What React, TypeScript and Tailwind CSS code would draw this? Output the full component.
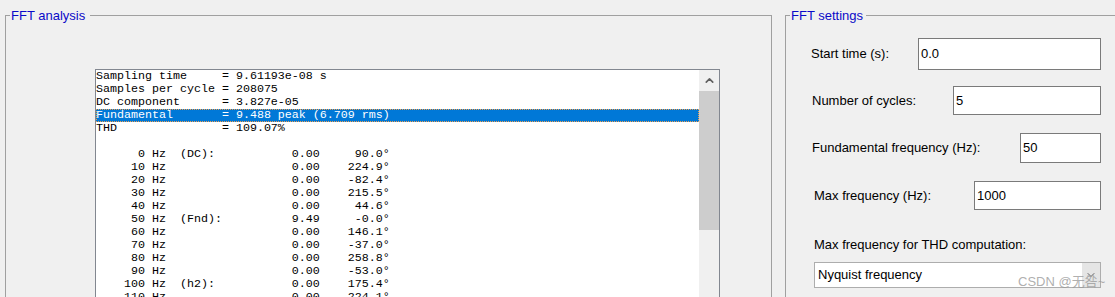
import { ChevronUp, ChevronDown } from "lucide-react"

const header = [
  "Sampling time     = 9.61193e-08 s",
  "Samples per cycle = 208075",
  "DC component      = 3.827e-05",
  "Fundamental       = 9.488 peak (6.709 rms)",
  "THD               = 109.07%",
]

const harmonics: [number, string, string, string][] = [
  [0, "(DC):", "0.00", "90.0"],
  [10, "", "0.00", "224.9"],
  [20, "", "0.00", "-82.4"],
  [30, "", "0.00", "215.5"],
  [40, "", "0.00", "44.6"],
  [50, "(Fnd):", "9.49", "-0.0"],
  [60, "", "0.00", "146.1"],
  [70, "", "0.00", "-37.0"],
  [80, "", "0.00", "258.8"],
  [90, "", "0.00", "-53.0"],
  [100, "(h2):", "0.00", "175.4"],
  [110, "", "0.00", "224.1"],
  [120, "", "0.00", "-12.7"],
]

const rowText = ([f, label, amp, ang]: [number, string, string, string]) =>
  `${String(f).padStart(7)} Hz  ${label.padEnd(16)}${amp}${ang.padStart(9)}°`

function Field({ label, value, pl, w, h }: { label: string; value: string; pl: string; w: string; h: string }) {
  return (
    <div className={`flex items-center justify-between ${pl}`}>
      <span>{label}</span>
      <div className={`${w} ${h} bg-white border border-[#7a7a7a] flex items-center pl-[2px]`}>{value}</div>
    </div>
  )
}

export default function App() {
  return (
    <div
      className="relative h-[297px] w-[1115px] overflow-hidden bg-[#f0f0f0] text-[13px] text-black"
      style={{ fontFamily: '"Liberation Sans", Arial, sans-serif' }}
    >
      <div className="flex pt-[8px] pl-[5px] gap-[13px]">
        {/* FFT analysis */}
        <fieldset className="w-[767px] h-[400px] border border-[#a0a0a0] shrink-0">
          <legend className="ml-[4px] pl-[1px] pr-[5px] leading-[15px] text-[#0a0ac8]">FFT analysis</legend>
          <div className="ml-[89px] mt-[46px] w-[625px] h-[300px] bg-white border border-[#828790] flex">
            <div
              className="flex-1 whitespace-pre text-[11.67px] leading-[13px]"
              style={{ fontFamily: '"Liberation Mono", "Courier New", monospace' }}
            >
              {header.map((line, i) => (
                <div
                  key={i}
                  className={
                    i === 3
                      ? "h-[13px] bg-[#0078d7] text-white outline-1 outline-dotted outline-[#f0a050] -outline-offset-1"
                      : "h-[13px]"
                  }
                >
                  {line}
                </div>
              ))}
              <div className="h-[13px]" />
              {harmonics.map((r, i) => (
                <div key={i} className="h-[13px]">
                  {rowText(r)}
                </div>
              ))}
            </div>
            <div className="w-[20px] bg-[#f0f0f0] flex flex-col">
              <div className="h-[21px] flex items-center justify-center text-[#606060]">
                <ChevronUp className="w-[13px] h-[13px]" strokeWidth={3} />
              </div>
              <div className="h-[139px] bg-[#cdcdcd]" />
            </div>
          </div>
        </fieldset>

        {/* FFT settings */}
        <fieldset className="w-[340px] h-[400px] border border-[#a0a0a0] shrink-0">
          <legend className="ml-[4px] pl-[1px] pr-[3px] leading-[15px] text-[#0a0ac8]">FFT settings</legend>
          <div className="w-[315px] mt-[15px] flex flex-col">
            <Field label="Start time (s):" value="0.0" pl="pl-[25px]" w="w-[183px]" h="h-[32px]" />
            <div className="mt-[16px]">
              <Field label="Number of cycles:" value="5" pl="pl-[26px]" w="w-[148px]" h="h-[29px]" />
            </div>
            <div className="mt-[18px]">
              <Field label="Fundamental frequency (Hz):" value="50" pl="pl-[26px]" w="w-[81px]" h="h-[30px]" />
            </div>
            <div className="mt-[18px]">
              <Field label="Max frequency (Hz):" value="1000" pl="pl-[28px]" w="w-[127px]" h="h-[29px]" />
            </div>
            <div className="mt-[27px] pl-[28px] leading-[15px]">Max frequency for THD computation:</div>
            <div className="mt-[10px] ml-[28px] h-[26px] bg-white border border-[#adadad] flex">
              <div className="flex-1 flex items-center pl-[3px]">Nyquist frequency</div>
              <div className="w-[18px] bg-[#e5e5e5] flex items-center justify-center text-[#606060]">
                <ChevronDown className="w-[12px] h-[12px]" strokeWidth={2} />
              </div>
            </div>
          </div>
        </fieldset>
      </div>

      <div
        className="absolute left-[1018px] top-[274px] text-[13px] text-[#9a9a9a]/80 leading-[16px]"
        style={{ fontFamily: '"Liberation Sans", "Noto Sans CJK SC", sans-serif' }}
      >
        CSDN @无咎~
      </div>
    </div>
  )
}
